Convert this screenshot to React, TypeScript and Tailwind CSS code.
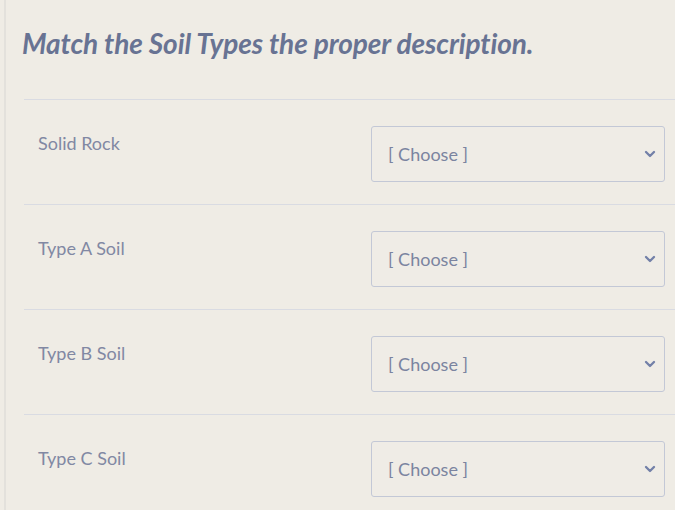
import { ChevronDown } from 'lucide-react';

const rows = ['Solid Rock', 'Type A Soil', 'Type B Soil', 'Type C Soil'];

function ChooseSelect() {
  return (
    <div className="flex h-[56px] w-[294px] items-center justify-between rounded-[3px] border border-[#c3c8d6] bg-[#efece6] pl-[16px] pr-[6px]">
      <span className="text-[18px] text-[#7b84a0]">[ Choose ]</span>
      <ChevronDown size={16} strokeWidth={3.5} className="text-[#7380a8]" />
    </div>
  );
}

export default function App() {
  return (
    <div
      className="h-[510px] w-[675px] overflow-hidden bg-[#efece5] pl-[4px]"
      style={{ fontFamily: 'Lato, "Open Sans", sans-serif' }}
    >
      <div className="h-full border-l-2 border-[#e3e1dc] pt-[25px]">
        <h1 className="ml-[16px] text-[28px] font-bold italic leading-[36px] tracking-[-0.1px] text-[#687393]">
          Match the Soil Types the proper description.
        </h1>

        {/* matching rows */}
        <div className="ml-[18px] mt-[38px]">
          {rows.map((label) => (
            <div
              key={label}
              className="flex items-start justify-between border-t border-[#d9dbe2] pb-[22px] pr-[10px] pt-[26px]"
            >
              <span className="pl-[14px] pt-[5px] text-[18px] leading-[24px] text-[#8188a3]">
                {label}
              </span>
              <ChooseSelect />
            </div>
          ))}
        </div>
      </div>
    </div>
  );
}
